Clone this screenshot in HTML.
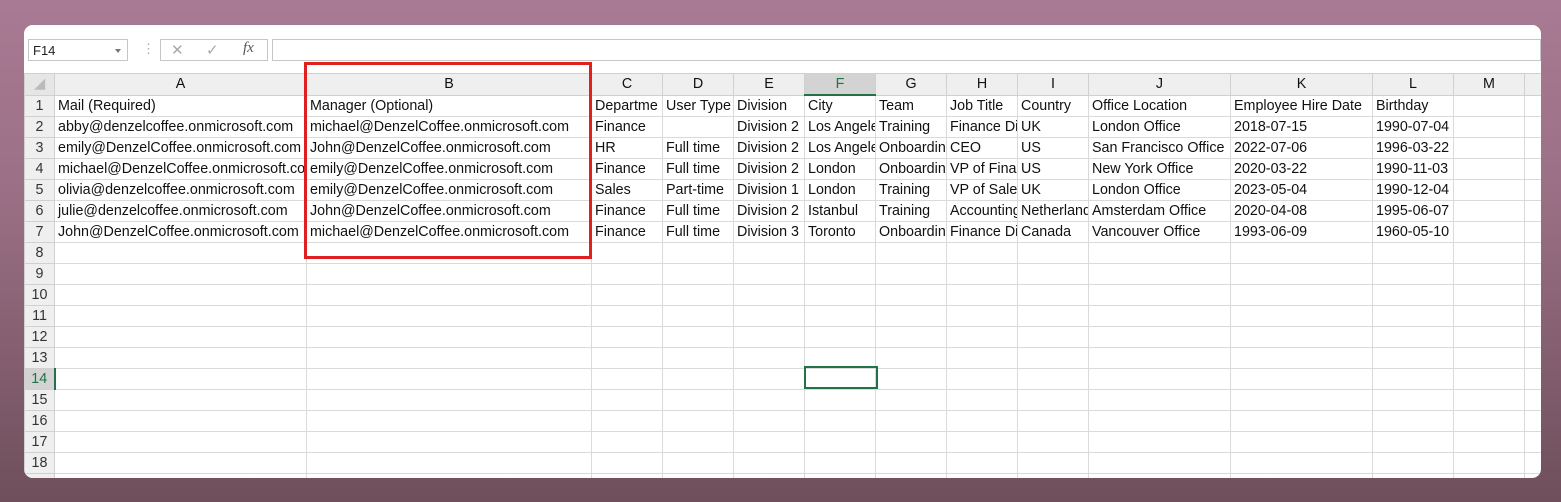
<!DOCTYPE html>
<html><head><meta charset="utf-8"><style>
html,body{margin:0;padding:0;width:1561px;height:502px;overflow:hidden;}
body{background:linear-gradient(180deg,#a97a94 0%,#9a6f84 40%,#6e4f5b 100%);position:relative;font-family:"Liberation Sans",sans-serif;}
.win{position:absolute;left:24px;top:25px;width:1517px;height:453px;background:#fff;border-radius:9px;overflow:hidden;}
.tb{position:absolute;left:0;top:0;width:1517px;height:48px;background:#fff;border-bottom:1px solid #d4d4d4;}
.nb{position:absolute;left:4px;top:14px;width:100px;height:22px;border:1px solid #c6c6c6;font-size:13px;line-height:22px;padding-left:4px;box-sizing:border-box;color:#222;}
.nb:after{content:"";position:absolute;right:6px;top:9px;border:3px solid transparent;border-top:4px solid #777;}
.fx{position:absolute;left:136px;top:14px;width:108px;height:22px;border:1px solid #c6c6c6;box-sizing:border-box;color:#aaa;font-size:15px;}
.fi{position:absolute;left:248px;top:14px;width:1269px;height:22px;border:1px solid #c6c6c6;box-sizing:border-box;}
table{position:absolute;left:0;top:48px;width:1517px;border-collapse:collapse;table-layout:fixed;font-size:14.3px;color:#111;}
td{height:20px;padding:0 0 0 3px;border:1px solid #dadada;white-space:nowrap;overflow:hidden;text-overflow:clip;max-width:0;line-height:20px;box-sizing:border-box;}
tr.h td{background:#efefef;text-align:center;border-color:#d0d0d0;padding:0;}
td.r{background:#efefef;text-align:center;padding:0;border-color:#d0d0d0;color:#333;}
.red{position:absolute;left:280px;top:37px;width:282px;height:191px;border:3px solid #e02020;}
.sel{position:absolute;left:780px;top:341px;width:70px;height:19px;border:2px solid #217346;}
</style></head><body>
<div class="win">
<div class="tb">
<div class="nb">F14</div>
<div style="position:absolute;left:118px;top:16px;color:#aaa;font-size:13px">⋮</div>
<div class="fx"><span style="position:absolute;left:10px;top:1px">✕</span><span style="position:absolute;left:45px;top:1px">✓</span><span style="position:absolute;left:82px;top:0;color:#555;font-family:'Liberation Serif';font-style:italic">fx</span></div>
<div class="fi"></div>
</div>
<table>
<colgroup><col style="width:30px"><col style="width:252px"><col style="width:285px"><col style="width:71px"><col style="width:71px"><col style="width:71px"><col style="width:71px"><col style="width:71px"><col style="width:71px"><col style="width:71px"><col style="width:142px"><col style="width:142px"><col style="width:81px"><col style="width:71px"><col style="width:17px"></colgroup>
<tr class="h"><td style="background:#e6e6e6;color:#bbb">◢</td><td>A</td><td>B</td><td>C</td><td>D</td><td>E</td><td style="background:#d3d3d3;color:#217346;border-bottom:2px solid #217346">F</td><td>G</td><td>H</td><td>I</td><td>J</td><td>K</td><td>L</td><td>M</td><td></td></tr>
<tr><td class="r">1</td><td>Mail (Required)</td><td>Manager (Optional)</td><td>Departme</td><td>User Type</td><td>Division</td><td>City</td><td>Team</td><td>Job Title</td><td>Country</td><td>Office Location</td><td>Employee Hire Date</td><td>Birthday</td><td></td><td></td></tr>
<tr><td class="r">2</td><td>abby@denzelcoffee.onmicrosoft.com</td><td>michael@DenzelCoffee.onmicrosoft.com</td><td>Finance</td><td></td><td>Division 2</td><td>Los Angeles</td><td>Training</td><td>Finance Di</td><td>UK</td><td>London Office</td><td>2018-07-15</td><td>1990-07-04</td><td></td><td></td></tr>
<tr><td class="r">3</td><td>emily@DenzelCoffee.onmicrosoft.com</td><td>John@DenzelCoffee.onmicrosoft.com</td><td>HR</td><td>Full time</td><td>Division 2</td><td>Los Angeles</td><td>Onboarding</td><td>CEO</td><td>US</td><td>San Francisco Office</td><td>2022-07-06</td><td>1996-03-22</td><td></td><td></td></tr>
<tr><td class="r">4</td><td>michael@DenzelCoffee.onmicrosoft.com</td><td>emily@DenzelCoffee.onmicrosoft.com</td><td>Finance</td><td>Full time</td><td>Division 2</td><td>London</td><td>Onboarding</td><td>VP of Finance</td><td>US</td><td>New York Office</td><td>2020-03-22</td><td>1990-11-03</td><td></td><td></td></tr>
<tr><td class="r">5</td><td>olivia@denzelcoffee.onmicrosoft.com</td><td>emily@DenzelCoffee.onmicrosoft.com</td><td>Sales</td><td>Part-time</td><td>Division 1</td><td>London</td><td>Training</td><td>VP of Sales</td><td>UK</td><td>London Office</td><td>2023-05-04</td><td>1990-12-04</td><td></td><td></td></tr>
<tr><td class="r">6</td><td>julie@denzelcoffee.onmicrosoft.com</td><td>John@DenzelCoffee.onmicrosoft.com</td><td>Finance</td><td>Full time</td><td>Division 2</td><td>Istanbul</td><td>Training</td><td>Accounting</td><td>Netherlands</td><td>Amsterdam Office</td><td>2020-04-08</td><td>1995-06-07</td><td></td><td></td></tr>
<tr><td class="r">7</td><td>John@DenzelCoffee.onmicrosoft.com</td><td>michael@DenzelCoffee.onmicrosoft.com</td><td>Finance</td><td>Full time</td><td>Division 3</td><td>Toronto</td><td>Onboarding</td><td>Finance Di</td><td>Canada</td><td>Vancouver Office</td><td>1993-06-09</td><td>1960-05-10</td><td></td><td></td></tr>
<tr><td class="r">8</td><td></td><td></td><td></td><td></td><td></td><td></td><td></td><td></td><td></td><td></td><td></td><td></td><td></td><td></td></tr>
<tr><td class="r">9</td><td></td><td></td><td></td><td></td><td></td><td></td><td></td><td></td><td></td><td></td><td></td><td></td><td></td><td></td></tr>
<tr><td class="r">10</td><td></td><td></td><td></td><td></td><td></td><td></td><td></td><td></td><td></td><td></td><td></td><td></td><td></td><td></td></tr>
<tr><td class="r">11</td><td></td><td></td><td></td><td></td><td></td><td></td><td></td><td></td><td></td><td></td><td></td><td></td><td></td><td></td></tr>
<tr><td class="r">12</td><td></td><td></td><td></td><td></td><td></td><td></td><td></td><td></td><td></td><td></td><td></td><td></td><td></td><td></td></tr>
<tr><td class="r">13</td><td></td><td></td><td></td><td></td><td></td><td></td><td></td><td></td><td></td><td></td><td></td><td></td><td></td><td></td></tr>
<tr><td class="r" style="background:#d3d3d3;color:#217346;border-right:2px solid #217346">14</td><td></td><td></td><td></td><td></td><td></td><td></td><td></td><td></td><td></td><td></td><td></td><td></td><td></td><td></td></tr>
<tr><td class="r">15</td><td></td><td></td><td></td><td></td><td></td><td></td><td></td><td></td><td></td><td></td><td></td><td></td><td></td><td></td></tr>
<tr><td class="r">16</td><td></td><td></td><td></td><td></td><td></td><td></td><td></td><td></td><td></td><td></td><td></td><td></td><td></td><td></td></tr>
<tr><td class="r">17</td><td></td><td></td><td></td><td></td><td></td><td></td><td></td><td></td><td></td><td></td><td></td><td></td><td></td><td></td></tr>
<tr><td class="r">18</td><td></td><td></td><td></td><td></td><td></td><td></td><td></td><td></td><td></td><td></td><td></td><td></td><td></td><td></td></tr>
<tr><td class="r">19</td><td></td><td></td><td></td><td></td><td></td><td></td><td></td><td></td><td></td><td></td><td></td><td></td><td></td><td></td></tr>
</table>
<div class="red"></div>
<div class="sel"></div>
</div>
</body></html>
